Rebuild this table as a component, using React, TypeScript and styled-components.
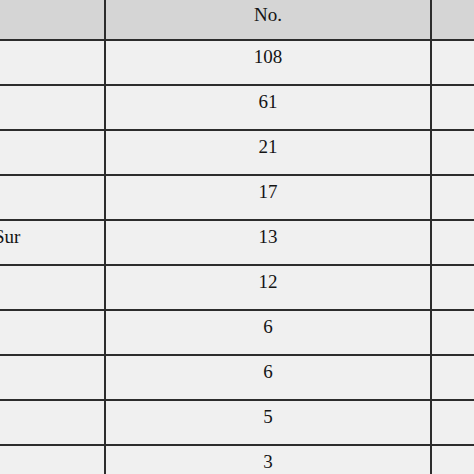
import React from "react";
import styled, { createGlobalStyle } from "styled-components";

const Global = createGlobalStyle`
  html, body { margin: 0; padding: 0; background: #f0f0f0; overflow: hidden; }
  body { width: 474px; height: 474px; }
`;

const Viewport = styled.div`
  width: 474px;
  height: 474px;
  overflow: hidden;
`;

const Grid = styled.div`
  margin-left: -14px;
  width: 700px;
  display: grid;
  grid-template-columns: 118px 324px 1fr;
  grid-template-rows: 39px;
  grid-auto-rows: 43px;
  gap: 2px;
  background: #2c2c2c;
  font-family: "Liberation Serif", "Times New Roman", serif;
  font-size: 19px;
  color: #141414;
`;

const HeadCell = styled.div<{ $align?: "left" | "center" }>`
  background: #d5d5d5;
  text-align: ${(p) => p.$align ?? "center"};
  padding: 4px 8px 0;
  line-height: 22px;
`;

const Cell = styled.div<{ $align?: "left" | "center" }>`
  background: #f0f0f0;
  text-align: ${(p) => p.$align ?? "center"};
  padding: 5px 8px 0;
  line-height: 22px;
`;

const rows: { name: string; no: string }[] = [
  { name: "", no: "108" },
  { name: "", no: "61" },
  { name: "", no: "21" },
  { name: "", no: "17" },
  { name: "Sur", no: "13" },
  { name: "", no: "12" },
  { name: "", no: "6" },
  { name: "", no: "6" },
  { name: "", no: "5" },
  { name: "", no: "3" },
];

export default function App() {
  return (
    <Viewport>
      <Global />
      <Grid>
        <HeadCell $align="left" />
        <HeadCell>No.</HeadCell>
        <HeadCell />
        {rows.map((r, i) => (
          <React.Fragment key={i}>
            <Cell $align="left">{r.name}</Cell>
            <Cell>{r.no}</Cell>
            <Cell />
          </React.Fragment>
        ))}
      </Grid>
    </Viewport>
  );
}
